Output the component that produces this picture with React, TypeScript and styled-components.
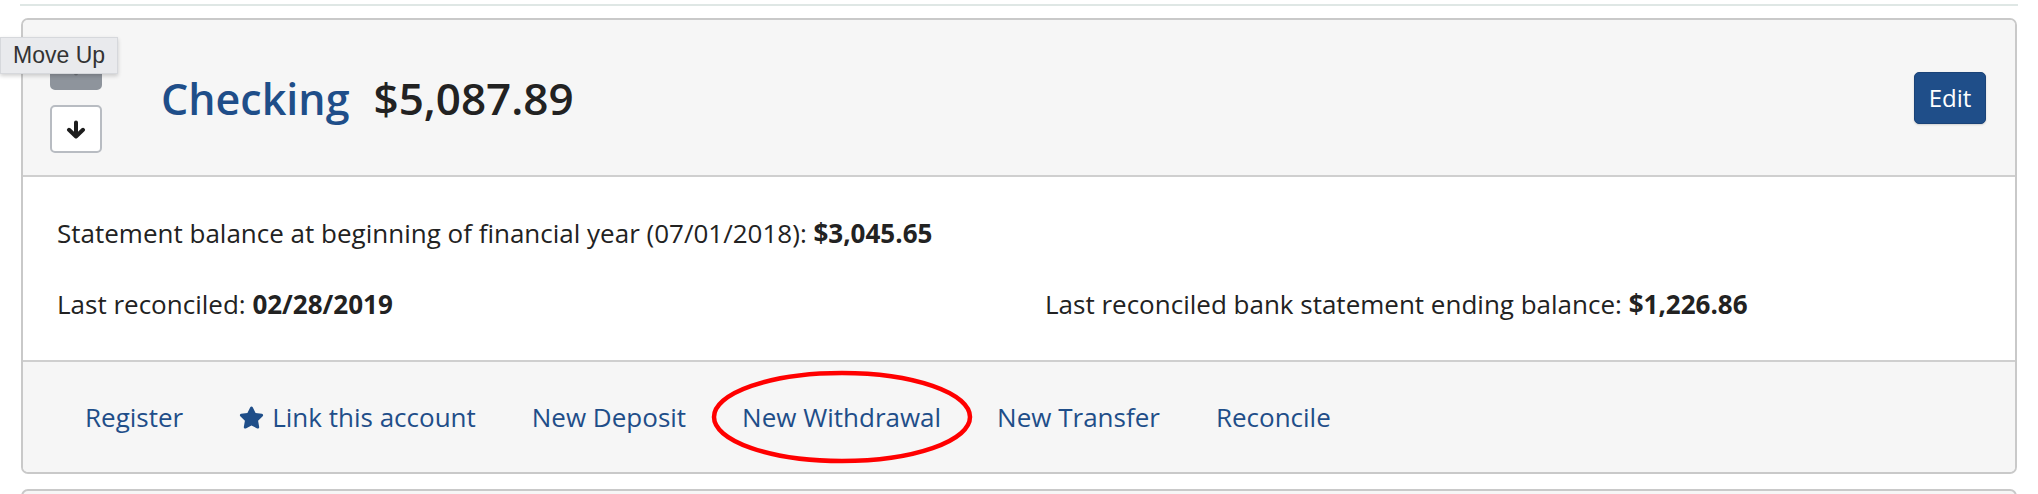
import React from "react";
import styled, { createGlobalStyle } from "styled-components";
import { FaStar } from "react-icons/fa";

const GlobalStyle = createGlobalStyle`
  body {
    margin: 0;
    background: #fff;
    font-family: "Open Sans", "Liberation Sans", sans-serif;
    color: #222;
  }
`;

const BLUE = "#1f4e89";

const Page = styled.div`
  padding: 4px 21px 0 21px;
`;

const TopRule = styled.div`
  height: 2px;
  margin: 0 -1px 12px -1px;
  background: #dfe7e5;
`;

const Card = styled.section`
  border: 2px solid #c9c9c9;
  border-radius: 7px;
  background: #fff;
  & + & {
    margin-top: 15px;
  }
`;

const Header = styled.header`
  display: flex;
  align-items: center;
  height: 155px;
  padding: 0 29px 0 27px;
  background: #f6f6f6;
  border-bottom: 2px solid #cfcfcf;
  border-radius: 5px 5px 0 0;
`;

const MoveCol = styled.div`
  position: relative;
  display: flex;
  flex-direction: column;
  gap: 15px;
`;

const MoveButton = styled.button<{ $muted?: boolean }>`
  display: flex;
  align-items: center;
  justify-content: center;
  width: 52px;
  height: 48px;
  padding: 0;
  border-radius: 5px;
  border: 2px solid ${(p) => (p.$muted ? "#8e949c" : "#b8bcc2")};
  background: ${(p) => (p.$muted ? "#8e949c" : "#fff")};
  color: ${(p) => (p.$muted ? "#6d7279" : "#1d1d1d")};
`;

const Tooltip = styled.div`
  position: absolute;
  left: -50px;
  top: -5px;
  width: 118px;
  height: 37px;
  box-sizing: border-box;
  padding-left: 12px;
  display: flex;
  align-items: center;
  background: #e9eaed;
  border: 1px solid #d6d8dc;
  box-shadow: 0 2px 4px rgba(0, 0, 0, 0.18);
  font-family: "Liberation Sans", Arial, sans-serif;
  font-size: 23px;
  color: #333;
  white-space: nowrap;
  z-index: 2;
`;

const Title = styled.h2`
  margin: 2px 0 0 59px;
  display: flex;
  align-items: baseline;
  gap: 24px;
  font-size: 43px;
  font-weight: 600;
  line-height: 1.2;
`;

const AccountName = styled.a`
  color: ${BLUE};
  text-decoration: none;
`;

const Balance = styled.span`
  color: #222;
  font-size: 44px;
`;

const EditButton = styled.button`
  margin-left: auto;
  width: 72px;
  height: 52px;
  border: 1px solid #1a4378;
  border-radius: 5px;
  background: ${BLUE};
  color: #fff;
  font-family: "Open Sans", sans-serif;
  font-size: 24px;
  box-shadow: 0 1px 2px rgba(0, 0, 0, 0.15);
`;

const Body = styled.div`
  display: flex;
  flex-direction: column;
  gap: 35px;
  padding: 38px 0 38px 34px;
  font-size: 26px;
  line-height: 36px;
`;

const Row = styled.div`
  display: grid;
  grid-template-columns: 988px auto;
`;

const Footer = styled.nav`
  display: flex;
  align-items: center;
  gap: 56px;
  height: 110px;
  padding-left: 62px;
  background: #f6f6f6;
  border-top: 2px solid #cfcfcf;
  border-radius: 0 0 5px 5px;
  font-size: 26px;
`;

const NavLink = styled.a`
  position: relative;
  display: inline-flex;
  align-items: center;
  gap: 8px;
  color: ${BLUE};
  text-decoration: none;
`;

const Circle = styled.svg`
  position: absolute;
  left: 50%;
  top: 50%;
  width: 262px;
  height: 94px;
  transform: translate(-50%, -50%);
  overflow: visible;
  pointer-events: none;
`;

const NextCard = styled(Card)`
  height: 60px;
  background: #f6f6f6;
`;

const Arrow = ({ up }: { up?: boolean }) => (
  <svg
    width="20"
    height="19"
    viewBox="0 0 20 19"
    fill="none"
    stroke="currentColor"
    strokeWidth="4"
    strokeLinecap="round"
    strokeLinejoin="round"
    style={up ? { transform: "rotate(180deg)" } : undefined}
  >
    <path d="M10 2.5V16.5M3 9.8L10 16.5L17 9.8" />
  </svg>
);

export default function App() {
  return (
    <Page>
      <GlobalStyle />
      <TopRule />
      <Card>
        <Header>
          <MoveCol>
            <Tooltip>Move Up</Tooltip>
            <MoveButton $muted aria-label="Move Up">
              <Arrow up />
            </MoveButton>
            <MoveButton aria-label="Move Down">
              <Arrow />
            </MoveButton>
          </MoveCol>
          <Title>
            <AccountName href="#">Checking</AccountName>
            <Balance>$5,087.89</Balance>
          </Title>
          <EditButton>Edit</EditButton>
        </Header>
        <Body>
          <Row>
            <span>
              Statement balance at beginning of financial year (07/01/2018): <b>$3,045.65</b>
            </span>
          </Row>
          <Row>
            <span>
              Last reconciled: <b>02/28/2019</b>
            </span>
            <span>
              Last reconciled bank statement ending balance: <b>$1,226.86</b>
            </span>
          </Row>
        </Body>
        <Footer>
          <NavLink href="#">Register</NavLink>
          <NavLink href="#">
            <FaStar size={25} />
            Link this account
          </NavLink>
          <NavLink href="#">New Deposit</NavLink>
          <NavLink href="#">
            New Withdrawal
            <Circle viewBox="0 0 262 94">
              <ellipse cx="131" cy="47" rx="128" ry="44" fill="none" stroke="#f00" strokeWidth="4.5" />
            </Circle>
          </NavLink>
          <NavLink href="#">New Transfer</NavLink>
          <NavLink href="#">Reconcile</NavLink>
        </Footer>
      </Card>
      <NextCard />
    </Page>
  );
}
